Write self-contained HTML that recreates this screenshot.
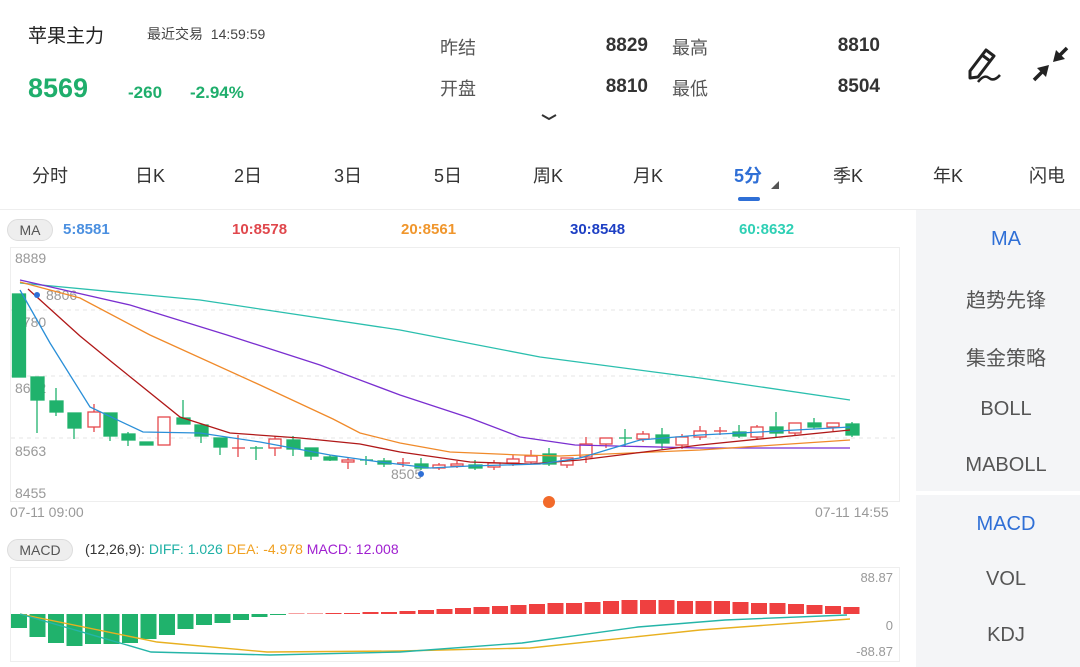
<!DOCTYPE html>
<html><head><meta charset="utf-8"><style>
*{margin:0;padding:0;box-sizing:border-box}
body{width:1080px;height:667px;overflow:hidden;background:#fff;font-family:"Liberation Sans","Noto Sans CJK SC",sans-serif;position:relative}
.a{position:absolute;white-space:nowrap}
.tab{position:absolute;top:162px;font-size:18px;color:#333;transform:translateX(-50%);white-space:nowrap}
.side{position:absolute;left:916px;width:164px;background:#f4f5f7}
.si{position:absolute;width:164px;text-align:center;font-size:20px;color:#555}
</style></head><body>
<div class="a" style="left:28px;top:21px;font-size:19px;color:#222">苹果主力</div>
<div class="a" style="left:147px;top:24px;font-size:14px;color:#444">最近交易&nbsp; 14:59:59</div>
<div class="a" style="left:28px;top:73px;font-size:27px;font-weight:bold;color:#1fae6c">8569</div>
<div class="a" style="left:128px;top:83px;font-size:17px;font-weight:bold;color:#1fae6c">-260</div>
<div class="a" style="left:190px;top:83px;font-size:17px;font-weight:bold;color:#1fae6c">-2.94%</div>
<div class="a" style="left:440px;top:34px;font-size:18px;color:#555">昨结</div>
<div class="a" style="left:440px;top:75px;font-size:18px;color:#555">开盘</div>
<div class="a" style="left:578px;width:70px;text-align:right;top:35px;font-size:19px;font-weight:bold;color:#333">8829</div>
<div class="a" style="left:578px;width:70px;text-align:right;top:76px;font-size:19px;font-weight:bold;color:#333">8810</div>
<div class="a" style="left:672px;top:34px;font-size:18px;color:#555">最高</div>
<div class="a" style="left:672px;top:75px;font-size:18px;color:#555">最低</div>
<div class="a" style="left:810px;width:70px;text-align:right;top:35px;font-size:19px;font-weight:bold;color:#333">8810</div>
<div class="a" style="left:810px;width:70px;text-align:right;top:76px;font-size:19px;font-weight:bold;color:#333">8504</div>
<svg class="a" style="left:540px;top:112px" width="18" height="10"><path d="M2 3 L9 7 L16 3" stroke="#333" stroke-width="2" fill="none"/></svg>
<svg class="a" style="left:965px;top:45px" width="42" height="42"><path d="M5 26 L21 5 L29 11 L13 32 L5 33 Z M17 10 L25 16" stroke="#222" stroke-width="3" fill="none" stroke-linejoin="round"/><path d="M13 37 Q19 29 24 33 T35 30" stroke="#222" stroke-width="2.5" fill="none"/></svg>
<svg class="a" style="left:1030px;top:45px" width="42" height="42"><path d="M4 35 L13 26" stroke="#222" stroke-width="3.5"/><path d="M19 20 L7 23 L16 32 Z" fill="#222"/><path d="M37 3 L28 12" stroke="#222" stroke-width="3.5"/><path d="M23 17 L35 14 L26 5 Z" fill="#222"/></svg>
<div class="tab" style="left:50px">分时</div><div class="tab" style="left:150px">日K</div><div class="tab" style="left:248px">2日</div><div class="tab" style="left:348px">3日</div><div class="tab" style="left:448px">5日</div><div class="tab" style="left:548px">周K</div><div class="tab" style="left:648px">月K</div><div class="tab" style="left:748px;color:#2f6fd6;font-weight:bold">5分</div><div class="tab" style="left:848px">季K</div><div class="tab" style="left:948px">年K</div><div class="tab" style="left:1047px">闪电</div>
<svg class="a" style="left:770px;top:180px" width="10" height="10"><path d="M9 1 L9 9 L1 9Z" fill="#555"/></svg>
<div class="a" style="left:738px;top:197px;width:22px;height:4px;border-radius:2px;background:#2f6fd6"></div>
<div class="a" style="left:0;top:209px;width:1080px;height:1px;background:#eee"></div>
<div class="side" style="top:210px;height:281px"></div>
<div class="side" style="top:495px;height:172px"></div>
<div class="si" style="left:924px;top:228px;color:#2f6fd6">MA</div>
<div class="si" style="left:924px;top:284px">趋势先锋</div>
<div class="si" style="left:924px;top:342px">集金策略</div>
<div class="si" style="left:924px;top:398px">BOLL</div>
<div class="si" style="left:924px;top:454px">MABOLL</div>
<div class="si" style="left:924px;top:513px;color:#2f6fd6">MACD</div>
<div class="si" style="left:924px;top:568px">VOL</div>
<div class="si" style="left:924px;top:624px">KDJ</div>
<div class="a" style="left:7px;top:219px;width:46px;height:22px;border-radius:11px;background:#eee;border:1px solid #ddd;font-size:14px;color:#555;text-align:center;line-height:20px">MA</div>
<div class="a" style="left:63px;top:221px;font-size:15px;font-weight:bold;color:#4a8fe0">5:8581</div>
<div class="a" style="left:232px;top:221px;font-size:15px;font-weight:bold;color:#e0474c">10:8578</div>
<div class="a" style="left:401px;top:221px;font-size:15px;font-weight:bold;color:#f0962c">20:8561</div>
<div class="a" style="left:570px;top:221px;font-size:15px;font-weight:bold;color:#1d3fc4">30:8548</div>
<div class="a" style="left:739px;top:221px;font-size:15px;font-weight:bold;color:#2fd0b5">60:8632</div>
<div class="a" style="left:7px;top:539px;width:66px;height:22px;border-radius:11px;background:#eee;border:1px solid #ddd;font-size:14px;color:#555;text-align:center;line-height:20px">MACD</div>
<div class="a" style="left:85px;top:541px;font-size:14px;color:#333">(12,26,9): <span style="color:#1fb0a5">DIFF: 1.026</span> <span style="color:#f0a020">DEA: -4.978</span> <span style="color:#a020d0">MACD: 12.008</span></div>
<svg class="a" style="left:0;top:0" width="915" height="667" font-family="Liberation Sans,sans-serif">
<rect x="10.5" y="247.5" width="889" height="254" fill="none" stroke="#eee"/>
<g stroke="#e6e6e6" stroke-dasharray="4 4"><line x1="11" y1="310" x2="899" y2="310"/><line x1="11" y1="376" x2="899" y2="376"/><line x1="11" y1="438" x2="899" y2="438"/></g>
<g font-size="14" fill="#999"><text x="15" y="263">8889</text><text x="15" y="327">8780</text><text x="15" y="393">8672</text><text x="15" y="456">8563</text><text x="15" y="498">8455</text>
<text x="10" y="517">07-11 09:00</text><text x="815" y="517">07-11 14:55</text>
<text x="46" y="300">8806</text><text x="391" y="479">8505</text></g>
<g fill="#20b26c" stroke="#20b26c" stroke-width="1.3">
<rect x="12.5" y="294" width="13" height="83"/>
<line x1="37" y1="377" x2="37" y2="433"/><rect x="31" y="377" width="13" height="23"/>
<line x1="56" y1="388" x2="56" y2="416"/><rect x="50" y="401" width="13" height="11"/>
<line x1="74" y1="413" x2="74" y2="439"/><rect x="68" y="413" width="13" height="15"/>
<line x1="110" y1="413" x2="110" y2="441"/><rect x="104" y="413" width="13" height="23"/>
<line x1="128" y1="432" x2="128" y2="446"/><rect x="122" y="434" width="13" height="6"/>
<rect x="140" y="442" width="13" height="3"/>
<line x1="183" y1="400" x2="183" y2="424"/><rect x="177" y="418" width="13" height="6"/>
<line x1="201" y1="425" x2="201" y2="443"/><rect x="195" y="425" width="13" height="11"/>
<line x1="220" y1="438" x2="220" y2="455"/><rect x="214" y="438" width="13" height="9"/>
<line x1="256" y1="446" x2="256" y2="460"/><line x1="250" y1="448" x2="263" y2="448"/>
<line x1="293" y1="436" x2="293" y2="456"/><rect x="287" y="440" width="13" height="9"/>
<line x1="311" y1="448" x2="311" y2="460"/><rect x="305" y="448" width="13" height="8"/>
<line x1="330" y1="455" x2="330" y2="461"/><rect x="324" y="457" width="13" height="3"/>
<line x1="366" y1="456" x2="366" y2="465"/><line x1="360" y1="460" x2="373" y2="460"/>
<line x1="384" y1="458" x2="384" y2="467"/><rect x="378" y="461" width="13" height="3"/>
<line x1="421" y1="458" x2="421" y2="470"/><rect x="415" y="464" width="13" height="4"/>
<line x1="475" y1="460" x2="475" y2="470"/><rect x="469" y="465" width="13" height="3"/>
<line x1="549" y1="448" x2="549" y2="466"/><rect x="543" y="454" width="13" height="10"/>
<line x1="625" y1="429" x2="625" y2="447"/><line x1="619" y1="438" x2="632" y2="438"/>
<line x1="662" y1="428" x2="662" y2="449"/><rect x="656" y="435" width="13" height="8"/>
<line x1="739" y1="425" x2="739" y2="438"/><rect x="733" y="432" width="13" height="4"/>
<line x1="776" y1="412" x2="776" y2="437"/><rect x="770" y="427" width="13" height="6"/>
<line x1="814" y1="418" x2="814" y2="429"/><rect x="808" y="423" width="13" height="4"/>
<line x1="852" y1="422" x2="852" y2="437"/><rect x="846" y="424" width="13" height="11"/>
</g>
<g fill="#fff" stroke="#e5474c" stroke-width="1.3">
<line x1="94" y1="404" x2="94" y2="432"/><rect x="88" y="412" width="12" height="15"/>
<rect x="158" y="417" width="12" height="28"/>
<line x1="238" y1="435" x2="238" y2="457"/><line x1="232" y1="448" x2="245" y2="448"/>
<line x1="275" y1="436" x2="275" y2="456"/><rect x="269" y="439" width="12" height="9"/>
<line x1="348" y1="458" x2="348" y2="469"/><rect x="342" y="460" width="12" height="2"/>
<line x1="403" y1="458" x2="403" y2="467"/><line x1="397" y1="463" x2="410" y2="463"/>
<line x1="439" y1="463" x2="439" y2="470"/><rect x="433" y="465" width="12" height="3"/>
<line x1="457" y1="461" x2="457" y2="468"/><rect x="451" y="464" width="12" height="2"/>
<line x1="494" y1="460" x2="494" y2="470"/><rect x="488" y="463" width="12" height="4"/>
<line x1="513" y1="455" x2="513" y2="466"/><rect x="507" y="459" width="12" height="4"/>
<line x1="531" y1="450" x2="531" y2="464"/><rect x="525" y="456" width="12" height="6"/>
<line x1="567" y1="458" x2="567" y2="468"/><rect x="561" y="458" width="12" height="7"/>
<line x1="586" y1="437" x2="586" y2="463"/><rect x="580" y="444" width="12" height="13"/>
<line x1="606" y1="438" x2="606" y2="448"/><rect x="600" y="438" width="12" height="6"/>
<line x1="643" y1="431" x2="643" y2="442"/><rect x="637" y="434" width="12" height="5"/>
<line x1="682" y1="434" x2="682" y2="449"/><rect x="676" y="437" width="12" height="8"/>
<line x1="700" y1="426" x2="700" y2="440"/><rect x="694" y="431" width="12" height="6"/>
<line x1="720" y1="427" x2="720" y2="435"/><line x1="714" y1="431" x2="727" y2="431"/>
<line x1="757" y1="425" x2="757" y2="440"/><rect x="751" y="427" width="12" height="10"/>
<line x1="795" y1="423" x2="795" y2="436"/><rect x="789" y="423" width="12" height="10"/>
<line x1="833" y1="423" x2="833" y2="431"/><rect x="827" y="423" width="12" height="4"/>
</g>
<g fill="none" stroke-width="1.3">
<polyline stroke="#2bbfae" points="20,283 200,300 400,330 540,357 700,378 850,400"/>
<polyline stroke="#7a2fd0" points="20,280 130,305 227,335 320,365 400,395 470,418 520,437 575,445 700,448 850,448"/>
<polyline stroke="#f08a2a" points="20,282 80,298 150,335 260,385 333,419 360,433 400,443 450,452 520,455 560,456 700,450 850,440"/>
<polyline stroke="#b01818" points="28,289 80,336 113,363 180,417 230,433 300,438 360,444 400,452 470,462 530,464 580,460 700,445 850,430"/>
<polyline stroke="#2a8fd8" points="20,290 50,343 90,407 143,432 200,433 260,442 330,455 380,462 430,468 470,466 540,464 580,458 640,440 700,435 760,432 850,427"/>
</g>
<circle cx="37" cy="295" r="3" fill="#2f6fd6"/><circle cx="421" cy="474" r="3" fill="#2f6fd6"/>
<circle cx="549" cy="502" r="6" fill="#f26a2a"/>
<rect x="10.5" y="567.5" width="889" height="94" fill="none" stroke="#eee"/>
<g font-size="13" fill="#999" text-anchor="end"><text x="893" y="582">88.87</text><text x="893" y="630">0</text><text x="893" y="656">-88.87</text></g>
<g fill="#20b26c">
<rect x="11" y="614" width="16" height="14"/><rect x="29.5" y="614" width="16" height="23"/><rect x="48" y="614" width="16" height="29"/><rect x="66.5" y="614" width="16" height="32"/><rect x="85" y="614" width="16" height="30"/><rect x="103.5" y="614" width="16" height="30"/><rect x="122" y="614" width="16" height="29"/><rect x="140.5" y="614" width="16" height="25"/><rect x="159" y="614" width="16" height="21"/><rect x="177.5" y="614" width="16" height="15"/><rect x="196" y="614" width="16" height="11"/><rect x="214.5" y="614" width="16" height="9"/><rect x="233" y="614" width="16" height="6"/><rect x="251.5" y="614" width="16" height="3"/><rect x="270" y="614" width="16" height="1"/>
</g>
<g fill="#ef4040">
<rect x="288.5" y="613.5" width="16" height="0.5"/><rect x="307" y="613.5" width="16" height="0.5"/><rect x="325.5" y="613" width="16" height="1"/><rect x="344" y="613" width="16" height="1"/><rect x="362.5" y="612" width="16" height="2"/><rect x="381" y="612" width="16" height="2"/><rect x="399.5" y="611" width="16" height="3"/><rect x="418" y="610" width="16" height="4"/><rect x="436.5" y="609" width="16" height="5"/><rect x="455" y="608" width="16" height="6"/><rect x="473.5" y="607" width="16" height="7"/><rect x="492" y="606" width="16" height="8"/><rect x="510.5" y="605" width="16" height="9"/><rect x="529" y="604" width="16" height="10"/><rect x="547.5" y="603" width="16" height="11"/><rect x="566" y="603" width="16" height="11"/><rect x="584.5" y="602" width="16" height="12"/><rect x="603" y="601" width="16" height="13"/><rect x="621.5" y="600" width="16" height="14"/><rect x="640" y="600" width="16" height="14"/><rect x="658.5" y="600" width="16" height="14"/><rect x="677" y="601" width="16" height="13"/><rect x="695.5" y="601" width="16" height="13"/><rect x="714" y="601" width="16" height="13"/><rect x="732.5" y="602" width="16" height="12"/><rect x="751" y="603" width="16" height="11"/><rect x="769.5" y="603" width="16" height="11"/><rect x="788" y="604" width="16" height="10"/><rect x="806.5" y="605" width="16" height="9"/><rect x="825" y="606" width="16" height="8"/><rect x="843.5" y="607" width="16" height="7"/>
</g>
<g fill="none" stroke-width="1.4">
<polyline stroke="#e8b020" points="20,614 157,642 267,652 400,651 530,648 700,630 850,619"/>
<polyline stroke="#25b5a8" points="20,614 151,652 270,655 400,652 522,643 638,627 725,620 847,615"/>
</g>
</svg>
</body></html>
